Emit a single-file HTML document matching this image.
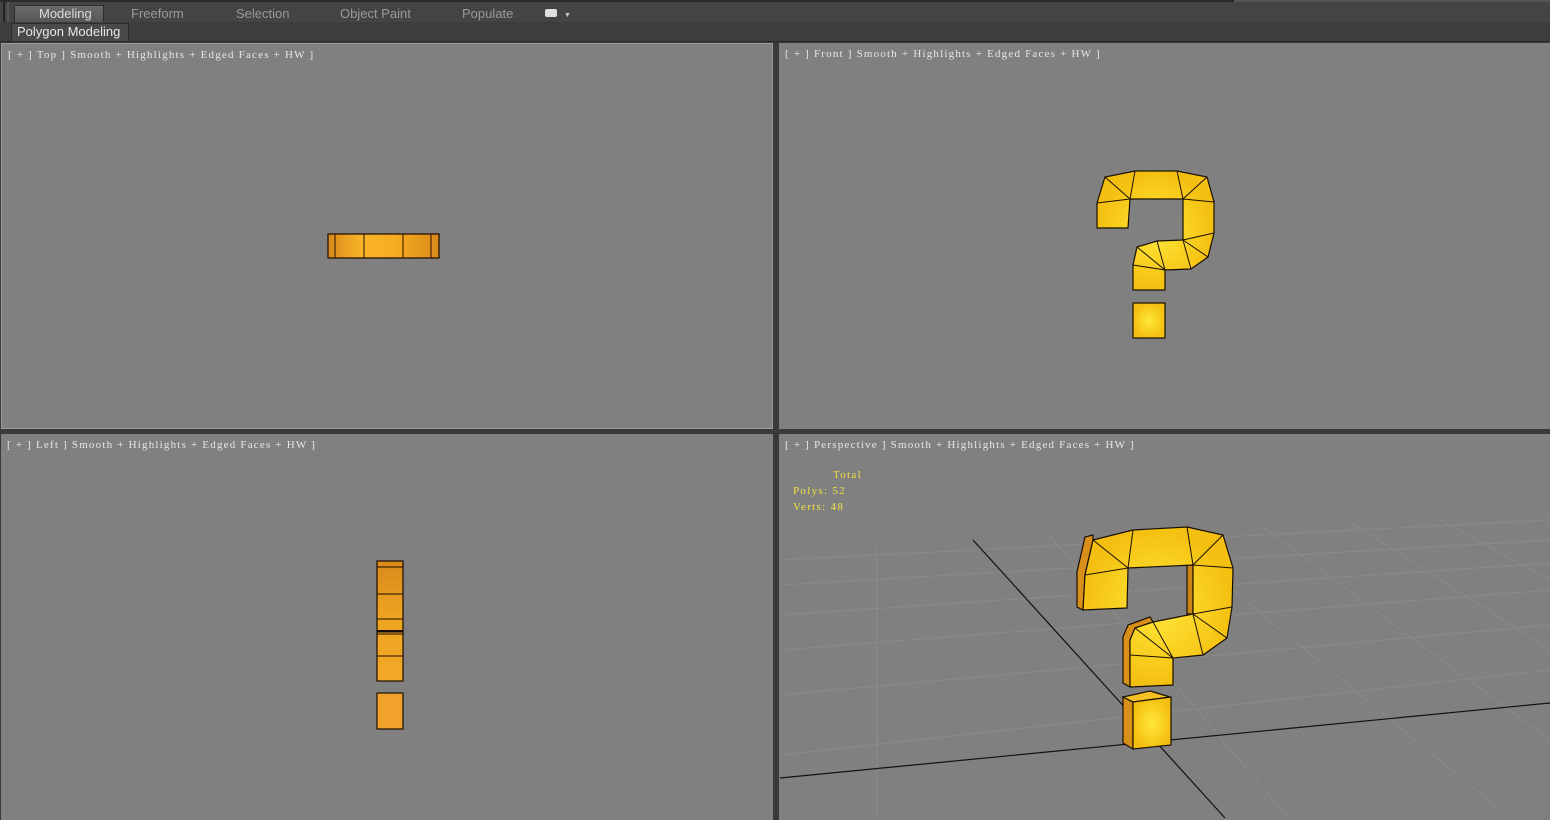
<!DOCTYPE html>
<html><head><meta charset="utf-8"><style>
*{margin:0;padding:0;box-sizing:border-box}
body{width:1550px;height:820px;background:#3a3a3a;position:relative;overflow:hidden;font-family:"Liberation Sans",sans-serif}
.bar1{position:absolute;left:0;top:0;width:1550px;height:22px;background:#444;border-top:2px solid #2a2a2a}
.bar2{position:absolute;left:0;top:22px;width:1550px;height:20px;background:#3d3d3d;border-bottom:1px solid #2a2a2a}
.tab{position:absolute;top:4px;font-size:13px;color:#9a9a9a}
.vp{position:absolute;background:#808080;overflow:hidden}
.lbl{position:absolute;left:6px;top:5px;font-family:"Liberation Serif",serif;font-size:11px;color:#e6e6e6;white-space:pre;letter-spacing:1.2px}
.st{position:absolute;font-family:"Liberation Serif",serif;font-size:11px;color:#f0e040;letter-spacing:1.3px;white-space:pre}
svg{position:absolute;left:0;top:0}
</style></head><body>
<div class="bar1">
<div style="position:absolute;left:3px;top:0;width:2px;height:20px;background:#222"></div>
<div style="position:absolute;left:7px;top:0;width:2px;height:40px;background:#555"></div>
<div style="position:absolute;left:14px;top:3px;width:90px;height:19px;background:linear-gradient(#6a6a6a,#555);border:1px solid #2e2e2e;border-bottom:none"></div>
<div class="tab" style="left:39px;color:#dcdcdc">Modeling</div>
<div class="tab" style="left:131px">Freeform</div>
<div class="tab" style="left:236px">Selection</div>
<div class="tab" style="left:340px">Object Paint</div>
<div class="tab" style="left:462px">Populate</div>
<div style="position:absolute;left:545px;top:7px;width:12px;height:8px;background:#e0e0e0;border-radius:2px"></div>
<div style="position:absolute;left:564px;top:10px;color:#ccc;font-size:7px">▼</div>
<div style="position:absolute;left:1234px;top:-2px;width:316px;height:2px;background:#555"></div>
</div>
<div class="bar2">
<div style="position:absolute;left:11px;top:1px;width:118px;height:19px;background:#4a4a4a;border:1px solid #2e2e2e"></div>
<div style="position:absolute;left:17px;top:2px;font-size:13px;color:#e8e8e8">Polygon Modeling</div>
</div>

<div class="vp" style="left:1px;top:43px;width:772px;height:386px;border:1px solid #9a9a9a">
<div class="lbl">[ + ] Top ] Smooth + Highlights + Edged Faces + HW ]</div>
<svg width="772" height="386">
<defs><linearGradient id="g1" x1="0" x2="1"><stop offset="0" stop-color="#d98a1a"/><stop offset=".3" stop-color="#f9b428"/><stop offset=".6" stop-color="#f6ad20"/><stop offset="1" stop-color="#d98a1a"/></linearGradient></defs>
<rect x="326" y="190" width="111" height="24" fill="url(#g1)" stroke="#2a1200" stroke-width="1.3"/>
<path d="M333 190V214M362 190V214M401 190V214M429 190V214" stroke="#2a1200"/>
</svg></div>

<div class="vp" style="left:779px;top:43px;width:771px;height:386px">
<div class="lbl">[ + ] Front ] Smooth + Highlights + Edged Faces + HW ]</div>
<svg width="771" height="386">
<defs><radialGradient id="gy"><stop offset="0" stop-color="#ffe83a"/><stop offset="1" stop-color="#f4bf10"/></radialGradient></defs>
<g transform="translate(-779,-43)" stroke="#1a1000" stroke-width="1.2" fill="url(#gy)">
<path d="M1097 228L1097 203L1105 177L1135 171L1177 171L1207 177L1214 202L1214 233L1208 257L1191 269L1165 270L1165 290L1133 290L1133 265L1137 247L1157 241L1183 240L1183 199L1130 199L1128 228Z"/>
<path d="M1097 203L1130 199M1105 177L1130 199M1135 171L1130 199M1177 171L1183 199M1207 177L1183 199M1214 202L1183 199M1214 233L1183 240M1208 257L1183 240M1191 269L1183 240M1157 241L1165 270M1137 247L1165 270M1133 265L1165 270" fill="none" stroke-width="1"/>
<rect x="1133" y="303" width="32" height="35"/>
</g></svg></div>

<div class="vp" style="left:1px;top:434px;width:772px;height:386px">
<div class="lbl">[ + ] Left ] Smooth + Highlights + Edged Faces + HW ]</div>
<svg width="772" height="386">
<defs><linearGradient id="g2" x1="0" y1="0" x2="0" y2="1"><stop offset="0" stop-color="#d88a1c"/><stop offset=".5" stop-color="#eea622"/><stop offset="1" stop-color="#f2aa26"/></linearGradient></defs>
<g transform="translate(-1,-434)" stroke="#1a0c00" stroke-width="1.2">
<rect x="377" y="561" width="26" height="120" fill="url(#g2)"/>
<path d="M377 567H403M377 594H403M377 619H403M377 632H403M377 634H403M377 656H403" stroke-width="1"/>
<path d="M377 631H403" stroke-width="2"/>
<rect x="377" y="693" width="26" height="36" fill="#f1a22a"/>
</g></svg></div>

<div class="vp" style="left:779px;top:434px;width:771px;height:386px">
<div class="lbl">[ + ] Perspective ] Smooth + Highlights + Edged Faces + HW ]</div>
<div class="st" style="left:54px;top:35px">Total</div>
<div class="st" style="left:14px;top:51px">Polys: 52</div>
<div class="st" style="left:14px;top:67px">Verts: 48</div>
<svg width="771" height="386">
<g transform="translate(-779,-434)">
<g stroke="#8a8a8a" stroke-width="1" fill="none">
<path d="M780 560L1550 520M780 585L1550 540M780 615L1550 563M780 650L1550 590M780 695L1550 625M780 755L1550 670"/>
<path d="M877 545V820M1050 536L1290 820M1160 530L1500 810M1260 525L1550 740M1350 522L1550 650M1440 520L1550 580"/>
</g>
<path d="M973 540L1225 818M780 778L1550 703" stroke="#111" stroke-width="1.2"/>
<g stroke="#1a1000" stroke-width="1.2">
<path d="M1077 607L1077 572L1085 537L1093 535L1093 540L1085 575L1083 610Z" fill="#d8901a"/>
<path d="M1187 565L1187 614L1193 614L1193 565Z" fill="#c88418"/>
<path d="M1123 683L1123 637L1128 625L1150 617L1153 622L1135 628L1130 640L1130 687Z" fill="#d8901a"/>
<path d="M1085 575L1093 540L1133 530L1187 527L1223 535L1233 568L1232 607L1227 638L1203 655L1173 658L1173 685L1130 687L1130 640L1135 628L1153 622L1193 614L1193 565L1128 568L1127 608L1083 610Z" fill="url(#gy)"/>
<path d="M1085 575L1128 568M1093 540L1128 568M1133 530L1128 568M1187 527L1193 565M1223 535L1193 565M1233 568L1193 565M1232 607L1193 614M1227 638L1193 614M1203 655L1193 614M1153 622L1173 658M1135 628L1173 658M1130 655L1173 658" fill="none" stroke-width="1"/>
<path d="M1123 743L1123 697L1133 702L1133 749Z" fill="#d8901a"/>
<path d="M1123 697L1150 691L1170 697L1133 702Z" fill="#f4c024"/>
<path d="M1133 702L1171 697L1171 745L1133 749Z" fill="url(#gy)"/>
</g></g></svg></div>
</body></html>
